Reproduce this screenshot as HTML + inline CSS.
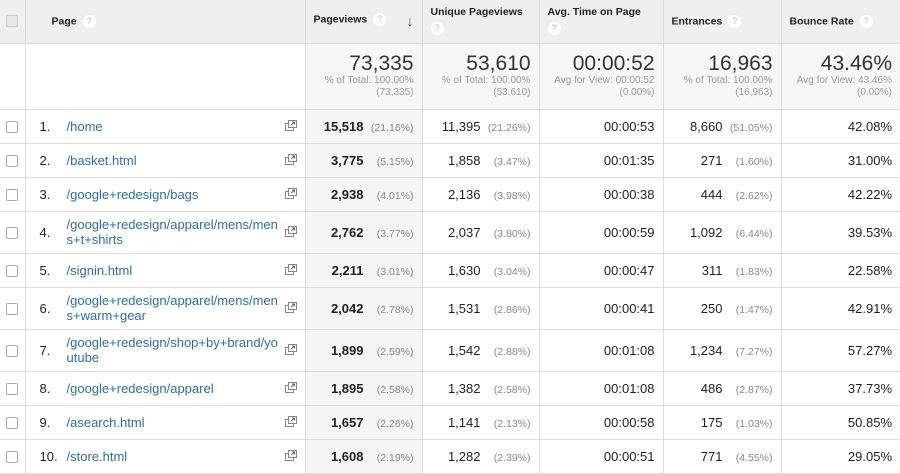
<!DOCTYPE html>
<html><head><meta charset="utf-8"><style>
*{margin:0;padding:0;box-sizing:border-box}
body{width:900px;height:473px;overflow:hidden;background:#fff;font-family:"Liberation Sans",Arial,sans-serif;color:#222}
table{border-collapse:collapse;table-layout:fixed;width:900px}
td,th{border:1px solid #ddd;font-size:13px;vertical-align:middle;overflow:hidden}
tr>*:first-child{border-left:none}
tr>*:last-child{border-right:none}
tr:first-child>*{border-top:none}
th{background:#efefef;font-weight:bold;font-size:10.5px;text-align:left;padding:0 8px;color:#222}
.q{display:inline-block;width:13px;height:13px;border-radius:50%;background:#fff;color:#bbb;font-size:9px;text-align:center;line-height:13px;font-weight:normal;margin-left:6px;vertical-align:middle}
.tot td{background:#f7f7f7;text-align:right;padding:0 8px;vertical-align:top;padding-top:9px}
.big{font-size:21px;color:#333;line-height:22px}
.sm{font-size:10px;color:#999;line-height:12px}
.cb{display:inline-block;width:12px;height:12px;border:1px solid #aaa;border-radius:2px;background:#fff;vertical-align:middle}
td.c0{text-align:center;padding:0}
td.pg{padding:0 26px 0 14px;position:relative}
.w{display:flex;align-items:center}
.n{flex:0 0 27px}
.lk{flex:0 0 214px;color:#2f6da8;word-break:break-all;line-height:15px}
.ic{position:absolute;right:8px;top:50%;margin-top:-6px;width:12px;height:11px}
td.r{text-align:right;padding:0 8px;white-space:nowrap}
td.pv{background:#f5f5f5}
b{font-weight:bold}
.p{color:#888;font-size:10.5px;display:inline-block;width:50px;text-align:right}
</style></head><body>
<table id="t">
<colgroup><col style="width:25px"><col style="width:280px"><col style="width:117px"><col style="width:117px"><col style="width:124px"><col style="width:118px"><col style="width:119px"></colgroup>
<tr style="height:43px">
<th style="text-align:center;padding:0"><span class="cb" style="background:#e8e8e8;border-color:#ccc"></span></th>
<th style="padding-left:26px">Page<span class="q">?</span></th>
<th>Pageviews<span class="q">?</span><span style="float:right;font-size:14px;font-weight:normal;color:#555">↓</span></th>
<th style="vertical-align:top;padding-top:6px">Unique Pageviews<br><span class="q" style="margin:4px 0 0">?</span></th>
<th style="vertical-align:top;padding-top:6px">Avg. Time on Page<br><span class="q" style="margin:4px 0 0">?</span></th>
<th>Entrances<span class="q">?</span></th>
<th>Bounce Rate<span class="q">?</span></th>
</tr>
<tr class="tot" style="height:66px">
<td style="background:#fff"></td><td style="background:#fff"></td>
<td><div class="big">73,335</div><div class="sm">% of Total: 100.00%<br>(73,335)</div></td>
<td><div class="big">53,610</div><div class="sm">% of Total: 100.00%<br>(53,610)</div></td>
<td><div class="big">00:00:52</div><div class="sm">Avg for View: 00:00:52<br>(0.00%)</div></td>
<td><div class="big">16,963</div><div class="sm">% of Total: 100.00%<br>(16,963)</div></td>
<td><div class="big">43.46%</div><div class="sm">Avg for View: 43.46%<br>(0.00%)</div></td>
</tr>
</table>
<script>
var rows=[
[34,"1.","/home","15,518","21.16%","11,395","21.26%","00:00:53","8,660","51.05%","42.08%"],
[34,"2.","/basket.html","3,775","5.15%","1,858","3.47%","00:01:35","271","1.60%","31.00%"],
[34,"3.","/google+redesign/bags","2,938","4.01%","2,136","3.98%","00:00:38","444","2.62%","42.22%"],
[42,"4.","/google+redesign/apparel/mens/mens+t+shirts","2,762","3.77%","2,037","3.80%","00:00:59","1,092","6.44%","39.53%"],
[34,"5.","/signin.html","2,211","3.01%","1,630","3.04%","00:00:47","311","1.83%","22.58%"],
[42,"6.","/google+redesign/apparel/mens/mens+warm+gear","2,042","2.78%","1,531","2.86%","00:00:41","250","1.47%","42.91%"],
[42,"7.","/google+redesign/shop+by+brand/youtube","1,899","2.59%","1,542","2.88%","00:01:08","1,234","7.27%","57.27%"],
[34,"8.","/google+redesign/apparel","1,895","2.58%","1,382","2.58%","00:01:08","486","2.87%","37.73%"],
[34,"9.","/asearch.html","1,657","2.26%","1,141","2.13%","00:00:58","175","1.03%","50.85%"],
[34,"10.","/store.html","1,608","2.19%","1,282","2.39%","00:00:51","771","4.55%","29.05%"]];
var ic='<svg class="ic" viewBox="0 0 12 11"><rect x="0.5" y="3.5" width="8" height="7" fill="#fff" stroke="#888"/><rect x="3.5" y="0.5" width="8" height="7" fill="#fff" stroke="#888"/><path d="M6 5L9.5 2M7 2h2.5v2.5" stroke="#666" fill="none"/></svg>';
var h='';
rows.forEach(function(r){
h+='<tr style="height:'+r[0]+'px"><td class="c0"><span class="cb"></span></td><td class="pg"><div class="w"><span class="n">'+r[1]+'</span><span class="lk">'+r[2]+'</span></div>'+ic+'</td>'+
'<td class="r pv"><b>'+r[3]+'</b><span class="p">('+r[4]+')</span></td>'+
'<td class="r">'+r[5]+'<span class="p">('+r[6]+')</span></td>'+
'<td class="r">'+r[7]+'</td>'+
'<td class="r">'+r[8]+'<span class="p">('+r[9]+')</span></td>'+
'<td class="r">'+r[10]+'</td></tr>';});
document.getElementById('t').insertAdjacentHTML('beforeend',h);
</script>
</body></html>
